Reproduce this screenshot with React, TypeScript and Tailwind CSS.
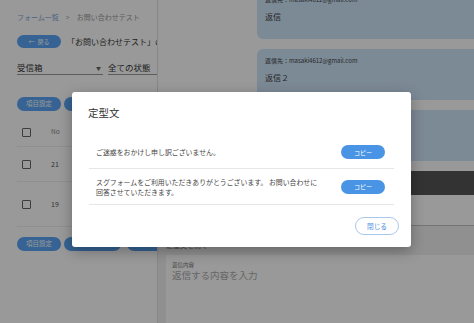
import React from 'react';

const templates = [
  { id: 1, lines: ['ご迷惑をおかけし申し訳ございません。'], height: 'h-[33px]' },
  {
    id: 2,
    lines: ['スグフォームをご利用いただきありがとうございます。 お問い合わせに', '回答させていただきます。'],
    height: 'h-[36px]',
  },
];

const replies = [
  { id: 1, to: 'masaki4612@gmail.com', body: '返信' },
  { id: 2, to: 'masaki4612@gmail.com', body: '返信２' },
  { id: 3, to: 'masaki4612@gmail.com', body: '返信３' },
];

function Checkbox() {
  return <span className="block h-[9px] w-[9px] rounded-[1px] border-[1.5px] border-[#666]" />;
}

function PillButton({ label, width }: { label: string; width: string }) {
  return (
    <span
      className={`flex h-[14px] ${width} shrink-0 items-center justify-center rounded-full bg-[#5aa6f5] text-[6.5px] text-white`}
    >
      {label}
    </span>
  );
}

function Sidebar() {
  return (
    <aside className="flex w-[158px] shrink-0 flex-col overflow-hidden border-r border-[#e2e2e2] bg-white pl-[17px]">
      <div className="mt-[12px] flex h-[10px] items-center gap-[7px] whitespace-nowrap text-[7px] leading-[10px]">
        <span className="text-[#7fa6d8]">フォーム一覧</span>
        <span className="text-[#aaa]">&gt;</span>
        <span className="text-[#999]">お問い合わせテスト</span>
      </div>

      <div className="mt-[13px] flex h-[13px] items-center gap-[6px] whitespace-nowrap">
        <span className="flex h-[13px] w-[44px] shrink-0 items-center justify-center gap-[3px] rounded-full bg-[#5aa6f5] text-[6px] text-white">
          <span>←</span>
          <span>戻る</span>
        </span>
        <span className="text-[8px] text-[#333]">「お問い合わせテスト」の受信箱</span>
      </div>

      <div className="mt-[13px] flex gap-[5px] whitespace-nowrap text-[8.5px] text-[#333]">
        <div className="flex h-[14px] w-[86px] shrink-0 items-center justify-between border-b border-[#999]">
          <span>受信箱</span>
          <span className="mr-[2px] text-[5px] text-[#666]">▼</span>
        </div>
        <div className="flex h-[14px] w-[86px] shrink-0 items-center border-b border-[#999]">
          <span>全ての状態</span>
        </div>
      </div>

      <div className="mt-[22px] flex gap-[3px]">
        <PillButton label="項目設定" width="w-[44px]" />
        <PillButton label="CSV出力" width="w-[57px]" />
      </div>

      <div className="mt-[7px] flex flex-col text-[7px] text-[#555]">
        <div className="flex h-[29px] items-center border-b border-[#eee] pl-[5px]">
          <Checkbox />
          <span className="ml-[20px] text-[6.5px] text-[#888]">No</span>
        </div>
        <div className="flex h-[35px] items-center border-b border-[#eee] pl-[5px]">
          <Checkbox />
          <span className="ml-[20px]">21</span>
        </div>
        <div className="flex h-[45px] items-center border-b border-[#eee] pl-[5px]">
          <Checkbox />
          <span className="ml-[20px]">19</span>
        </div>
      </div>

      <div className="mt-[10px] flex gap-[3px]">
        <PillButton label="項目設定" width="w-[44px]" />
        <PillButton label="CSV出力" width="w-[57px]" />
        <span className="ml-[3px] h-[14px] w-[40px] shrink-0 rounded-l-full bg-[#5aa6f5]" />
      </div>
    </aside>
  );
}

function Thread() {
  return (
    <main className="flex min-w-0 flex-1 flex-col">
      <div className="-mt-[12px] flex flex-col gap-[10px] pl-[99px]">
        {replies.map((r) => (
          <div key={r.id} className="h-[51px] rounded-l-[6px] bg-[#cfe6fb] px-[8px] pt-[8px] text-[#444]">
            <div className="text-[6px] leading-[8px]">返信先：{r.to}</div>
            <div className="mt-[7px] text-[8px] leading-[12px]">{r.body}</div>
          </div>
        ))}
      </div>
      <div className="mt-[10px] h-[24px] bg-[#565656]" />
      <div className="h-[31px] border-b border-[#c4c4c4] bg-white" />
      <div className="flex flex-1 flex-col bg-[#f0f0f0] pl-[8px]">
        <div className="mt-[14px] text-[7px] leading-[10px] text-[#777]">定型文を開く</div>
        <div className="mt-[5px] flex-1 bg-white px-[6px] pt-[6px]">
          <div className="text-[5.5px] leading-[8px] text-[#777]">返信内容</div>
          <div className="text-[9.5px] leading-[13px] text-[#aaa]">返信する内容を入力</div>
        </div>
      </div>
    </main>
  );
}

function TemplateDialog() {
  return (
    <div className="flex h-[155px] w-[339px] flex-col rounded-[3px] bg-white shadow-[0_4px_14px_rgba(0,0,0,0.3)]">
      <h2 className="pl-[16px] pt-[14px] text-[10.5px] leading-[13px] text-[#333]">定型文</h2>

      <ul className="mx-[17px] mt-[17px]">
        {templates.map((t) => (
          <li
            key={t.id}
            className={`flex ${t.height} items-center justify-between border-b border-[#e6e6e6] pl-[7px] pr-[9px]`}
          >
            <p className="text-[6.9px] leading-[10px] text-[#444]">
              {t.lines.map((line, i) => (
                <React.Fragment key={i}>
                  {i > 0 && <br />}
                  {line}
                </React.Fragment>
              ))}
            </p>
            <button className="flex h-[14px] w-[44px] items-center justify-center rounded-full bg-[#4a94e6] text-[6px] text-white">
              コピー
            </button>
          </li>
        ))}
      </ul>

      <div className="mt-[12px] flex justify-end pr-[12px]">
        <button className="flex h-[18px] w-[44px] items-center justify-center rounded-full border border-[#a9c7ec] text-[6.7px] text-[#4a8fdf]">
          閉じる
        </button>
      </div>
    </div>
  );
}

export default function App() {
  return (
    <div className="relative h-[323px] w-[474px] overflow-hidden bg-white font-['Noto_Sans_CJK_JP','Noto_Sans',sans-serif]">
      <div className="flex h-full">
        <Sidebar />
        <Thread />
      </div>

      <div className="absolute inset-0 bg-black/40 pl-[72px] pt-[92px]">
        <TemplateDialog />
      </div>
    </div>
  );
}
